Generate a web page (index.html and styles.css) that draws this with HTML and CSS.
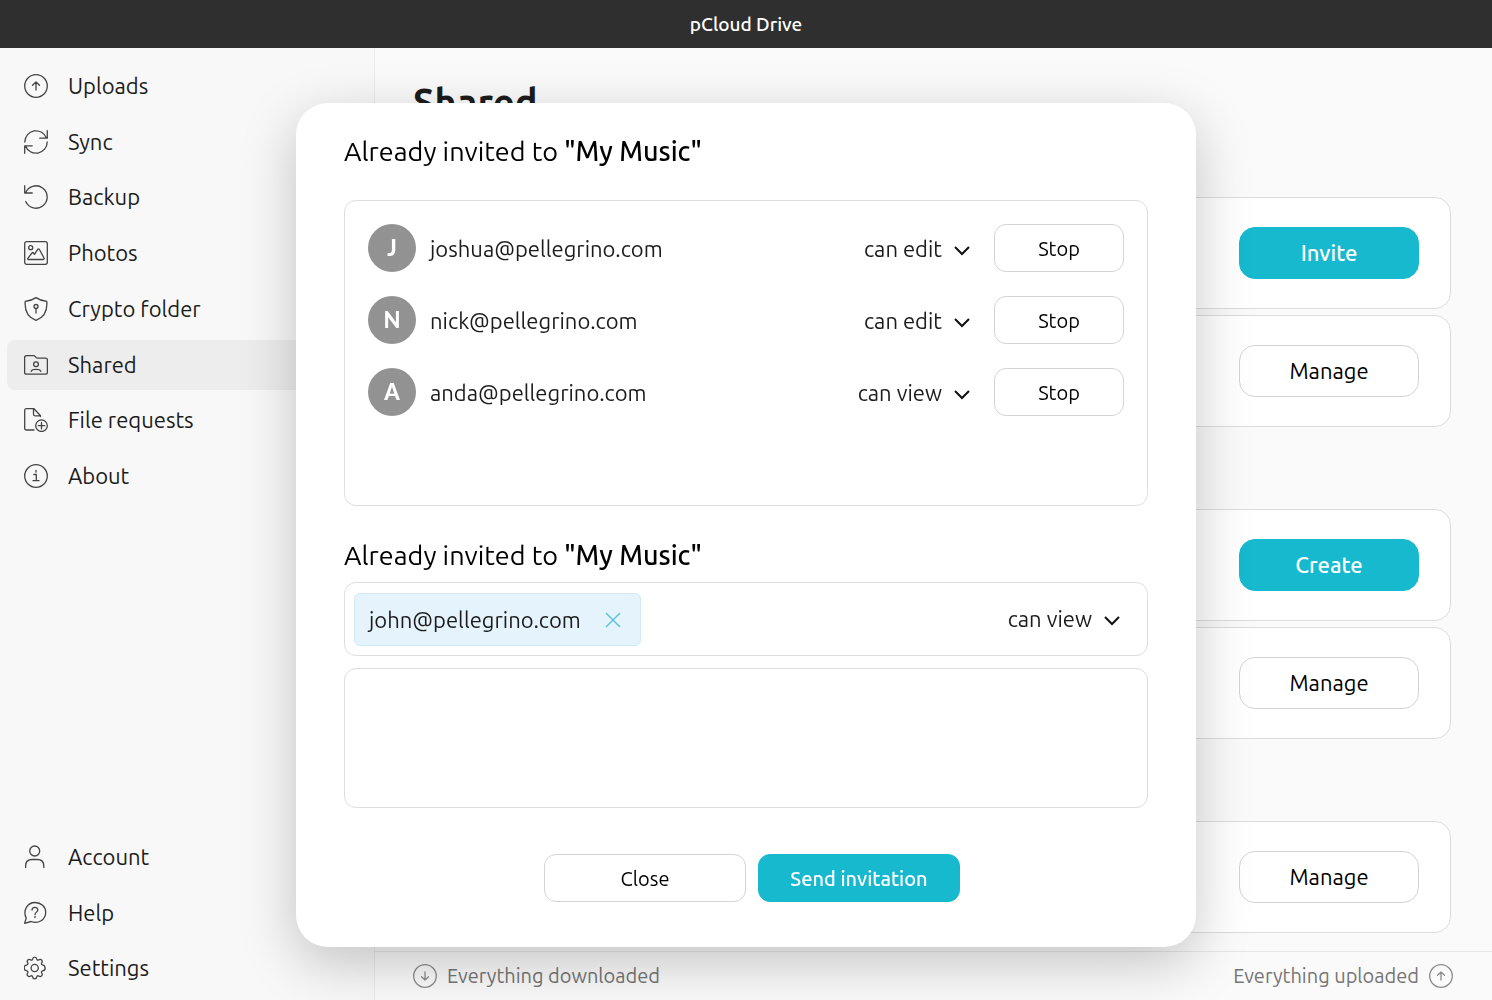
FILE: index.html
```html
<!DOCTYPE html>
<html lang="en">
<head>
<meta charset="utf-8">
<title>pCloud Drive</title>
<meta name="viewport" content="width=device-width, initial-scale=1">
<link rel="stylesheet" href="styles.css">
</head>
<body>
<div class="app">
  <header class="titlebar">pCloud Drive</header>

  <aside class="sidebar">
    <nav class="nav nav-main" aria-label="Main">
      <a class="nav-item" href="#uploads">
        <svg class="icon" viewBox="0 0 24 24"><circle cx="12" cy="12" r="11.3"/><path d="M12 16V8.200M8.500 11.300 12 8l3.500 3.300"/></svg>
        Uploads</a>
      <a class="nav-item" href="#sync">
        <svg class="icon" viewBox="0 0 24 24"><path d="M.8 12A11.200 11.200 0 0 1 22.500 8.100M23.300.7v7.500h-7.500M23.200 12A11.200 11.200 0 0 1 1.500 15.900M.7 23.300v-7.500h7.500"/></svg>
        Sync</a>
      <a class="nav-item" href="#backup">
        <svg class="icon" viewBox="0 0 24 24"><path d="M.7.700v7.300h7.500M1.500 8a11.200 11.200 0 1 1 .200 8.500"/></svg>
        Backup</a>
      <a class="nav-item" href="#photos">
        <svg class="icon" viewBox="0 0 24 24"><rect x=".7" y=".7" width="22.600" height="22.600" rx="2"/><circle cx="6.700" cy="6.700" r="2"/><path d="M4.500 18.500c-.8 0-.9-.7-.5-1.300l4-5.200c.6-.7 1-.7 1.500 0l1 1.300 3.200-5c.5-.7 1.100-.7 1.600 0l4.700 8.700c.4.800.1 1.500-.7 1.500z"/></svg>
        Photos</a>
      <a class="nav-item" href="#crypto">
        <svg class="icon" viewBox="0 0 24 24"><path d="M12 .6c3.500 2.400 6.800 3.400 10.800 3.800.7 8.600-2.300 15.800-10.800 19C3.500 20.200.5 13 1.200 4.400 5.200 4 8.500 3 12 .6z"/><circle cx="12" cy="9.500" r="2"/><path d="M12 11.500v4.500"/></svg>
        Crypto folder</a>
      <a class="nav-item active" href="#shared" aria-current="page">
        <svg class="icon" viewBox="0 0 24 24"><path d="M2.500 2.700h7c.8 0 1.300.3 1.800.9.600.9 1.200 1.500 2.200 1.500h8c1.200 0 1.900.7 1.900 1.900v12.300c0 1.200-.7 1.900-1.900 1.900h-19c-1.200 0-1.900-.7-1.900-1.900V4.600c0-1.200.7-1.900 1.900-1.900z"/><circle cx="12" cy="11.300" r="2.400"/><path d="M7.300 18.300c.8-2.500 8.600-2.500 9.400 0"/></svg>
        Shared</a>
      <a class="nav-item" href="#requests">
        <svg class="icon" viewBox="0 0 24 24"><path d="M10 22H2.500C1.300 22 .7 21.400.7 20.200V2.500C.7 1.300 1.300.7 2.500.7H10l6.500 7.100M9.500.7v5.600c0 1 .5 1.500 1.500 1.500h5.500v.800"/><circle cx="17.500" cy="17.700" r="5.800"/><path d="M17.500 14.500v6.400M14.300 17.700h6.400"/></svg>
        File requests</a>
      <a class="nav-item" href="#about">
        <svg class="icon" viewBox="0 0 24 24"><circle cx="12" cy="12" r="11.300"/><path d="M9.800 10.500h2.500v6M9 16.700h6M12 6.500v1.700"/></svg>
        About</a>
    </nav>
    <nav class="nav nav-foot" aria-label="Account">
      <a class="nav-item" href="#account">
        <svg class="icon" viewBox="0 0 24 24"><circle cx="10.700" cy="6" r="5"/><path d="M1.600 22.500v-1.500c0-4 2.500-6.500 6.500-6.500h5.200c4 0 6.500 2.500 6.500 6.500v1.500"/></svg>
        Account</a>
      <a class="nav-item" href="#help">
        <svg class="icon" viewBox="0 0 24 24"><path d="M.6 22.300l1.600-5.200C-1.500 9.500 3.500 1.500 11 1.500c6 0 10.700 4 10.700 9.700 0 7.500-7.200 12-14.700 9.300z"/><path d="M8 9c0-3.500 5.800-3.500 5.800 0 0 2-2.800 2.300-2.800 4.600M11 15.500v1"/></svg>
        Help</a>
      <a class="nav-item" href="#settings">
        <svg class="icon" viewBox="0 0 24 24"><circle cx="10.700" cy="12" r="3.600"/><path d="M8.600 3.100C9 .5 12.400.5 12.800 3.100c.2 1 1.100 1.300 1.900.8 2.200-1.600 4.500.7 3 2.900-.6.900-.2 1.800.8 2 2.800.4 4.100 5.600 0 6.100-1 .2-1.400 1.100-.8 2 1.600 2.200-.8 4.700-3 3.100-.8-.5-1.700-.1-1.900.9-.4 2.600-3.800 2.600-4.200 0-.2-1-1.100-1.400-1.900-.9-2.200 1.600-4.600-.9-3-3.100.6-.9.200-1.800-.8-2-3.700-.5-3.700-5.600 0-6.100 1-.2 1.400-1.100.8-2-1.500-2.200.8-4.500 3-2.900.8.500 1.700.2 1.900-.8z"/></svg>
        Settings</a>
    </nav>
  </aside>

  <main class="content">
    <h1 class="page-title">Shared</h1>
    <div class="groups">
      <section class="group">
        <div class="card"><button class="btn btn-large btn-primary" type="button">Invite</button></div>
        <div class="card"><button class="btn btn-large" type="button">Manage</button></div>
      </section>
      <section class="group">
        <div class="card"><button class="btn btn-large btn-primary" type="button">Create</button></div>
        <div class="card"><button class="btn btn-large" type="button">Manage</button></div>
      </section>
      <section class="group">
        <div class="card"><button class="btn btn-large" type="button">Manage</button></div>
      </section>
    </div>
  </main>

  <footer class="statusbar">
    <span class="status">
      <svg class="icon" viewBox="0 0 24 24"><circle cx="12" cy="12" r="11.300"/><path d="M12 8v7.800M8.500 12.700 12 16l3.500-3.300"/></svg>
      Everything downloaded</span>
    <span class="status">Everything uploaded
      <svg class="icon" viewBox="0 0 24 24"><circle cx="12" cy="12" r="11.300"/><path d="M12 16V8.200M8.500 11.300 12 8l3.500 3.300"/></svg></span>
  </footer>
</div>

<div class="overlay">
  <form class="dialog" role="dialog" aria-labelledby="dialog-title">
    <h2 class="dialog-title" id="dialog-title">Already invited to <strong>"My Music"</strong></h2>
    <ul class="people">
      <li class="person">
        <span class="avatar">J</span>
        <span class="email">joshua@pellegrino.com</span>
        <span class="picker">
          <select class="picker-select" aria-label="Permission for joshua@pellegrino.com"><option selected>can edit</option><option>can view</option></select>
          <svg class="chevron" viewBox="0 0 16 10"><path d="M1 1l7 7 7-7"/></svg>
        </span>
        <button class="btn btn-stop" type="button">Stop</button>
      </li>
      <li class="person">
        <span class="avatar">N</span>
        <span class="email">nick@pellegrino.com</span>
        <span class="picker">
          <select class="picker-select" aria-label="Permission for nick@pellegrino.com"><option selected>can edit</option><option>can view</option></select>
          <svg class="chevron" viewBox="0 0 16 10"><path d="M1 1l7 7 7-7"/></svg>
        </span>
        <button class="btn btn-stop" type="button">Stop</button>
      </li>
      <li class="person">
        <span class="avatar">A</span>
        <span class="email">anda@pellegrino.com</span>
        <span class="picker">
          <select class="picker-select" aria-label="Permission for anda@pellegrino.com"><option>can edit</option><option selected>can view</option></select>
          <svg class="chevron" viewBox="0 0 16 10"><path d="M1 1l7 7 7-7"/></svg>
        </span>
        <button class="btn btn-stop" type="button">Stop</button>
      </li>
    </ul>

    <h2 class="dialog-title invite-title">Already invited to <strong>"My Music"</strong></h2>
    <div class="invite-box">
      <span class="chip">john@pellegrino.com
        <button class="chip-remove" type="button" aria-label="Remove john@pellegrino.com"><svg viewBox="0 0 16 16"><path d="M1 1l14 14M15 1 1 15"/></svg></button>
      </span>
      <input class="invite-input" type="email" aria-label="Add an email address">
      <span class="picker">
        <select class="picker-select" aria-label="Permission for new people"><option>can edit</option><option selected>can view</option></select>
        <svg class="chevron" viewBox="0 0 16 10"><path d="M1 1l7 7 7-7"/></svg>
      </span>
    </div>
    <textarea class="message" aria-label="Message"></textarea>
    <div class="actions">
      <button class="btn btn-action" type="button">Close</button>
      <button class="btn btn-action btn-primary" type="submit">Send invitation</button>
    </div>
  </form>
</div>
</body>
</html>
```

FILE: styles.css
```css
* {
  box-sizing: border-box;
}

body {
  margin: 0;
  font-family: Ubuntu, "Noto Sans", sans-serif;
  font-size: 22px;
  line-height: 28px;
  color: #1c1c1c;
  background: #fafafa;
}

button,
input,
select,
textarea {
  font: inherit;
  color: inherit;
}

svg {
  display: block;
  flex: none;
  fill: none;
  stroke: currentColor;
}

/* Application shell */

.app {
  display: grid;
  grid-template: 48px 1fr auto / 375px 1fr;
  height: 100vh;
}

.titlebar {
  grid-column: 1 / -1;
  display: flex;
  align-items: center;
  justify-content: center;
  font-size: 19px;
  font-weight: 500;
  color: #fff;
  background: #2f2f2f;
}

.sidebar {
  grid-row: 2 / 4;
  display: flex;
  flex-direction: column;
  justify-content: space-between;
  padding: 13px 7px 7px;
  background: #f8f8f8;
  border-right: 1px solid #ebebeb;
}

.nav {
  display: flex;
  flex-direction: column;
  justify-content: space-between;
}

.nav-main {
  height: 440px;
}

.nav-foot {
  height: 161px;
}

.nav-item {
  display: flex;
  align-items: center;
  gap: 20px;
  height: 50px;
  padding: 0 17px;
  border-radius: 8px;
  color: inherit;
  text-decoration: none;
}

.nav-item.active {
  background: #ededed;
}

.icon {
  width: 24px;
  height: 24px;
  color: #444;
  stroke-width: 1.3;
  stroke-linecap: round;
  stroke-linejoin: round;
}

.content {
  padding: 30px 41px 0 38px;
  overflow: hidden;
}

.page-title {
  margin: 0 0 71px;
  font-size: 38px;
  line-height: 48px;
  font-weight: 700;
}

.groups {
  display: flex;
  flex-direction: column;
  gap: 82px;
}

.group {
  display: flex;
  flex-direction: column;
  gap: 6px;
}

.card {
  display: flex;
  align-items: center;
  justify-content: flex-end;
  height: 112px;
  padding: 0 31px;
  background: #fff;
  border: 1px solid #dcdcdc;
  border-radius: 16px;
}

.statusbar {
  display: flex;
  align-items: center;
  justify-content: space-between;
  height: 49px;
  padding: 0 39px 0 38px;
  font-size: 20px;
  color: #757575;
  border-top: 1px solid #e6e6e6;
}

.status {
  display: flex;
  align-items: center;
  gap: 10px;
}

.status .icon {
  color: #8c8c8c;
}

/* Buttons */

.btn {
  padding: 2px 0 0;
  font-size: 20px;
  color: #000;
  background: #fff;
  border: 1px solid #d4d4d4;
  border-radius: 12px;
  cursor: pointer;
}

.btn-large {
  width: 180px;
  height: 52px;
  padding: 0;
  font-size: 22px;
  border-radius: 16px;
}

.btn-stop {
  width: 130px;
  height: 48px;
}

.btn-action {
  width: 202px;
  height: 48px;
}

.btn-primary {
  color: #fff;
  font-weight: 500;
  background: #17b9cf;
  border-color: #17b9cf;
}

/* Sharing dialog */

.overlay {
  position: fixed;
  inset: 0;
  display: flex;
  align-items: flex-start;
  justify-content: center;
  padding-top: 103px;
}

.dialog {
  width: 900px;
  max-width: 100%;
  padding: 28px 48px 45px;
  background: #fff;
  border-radius: 32px;
  box-shadow: 0 16px 56px rgba(0, 0, 0, 0.22);
}

.dialog-title {
  margin: 0;
  font-size: 27px;
  line-height: 40px;
  font-weight: 400;
  color: #000;
}

.dialog-title strong {
  font-weight: 500;
}

.people {
  display: flex;
  flex-direction: column;
  gap: 24px;
  min-height: 306px;
  margin: 29px 0 0;
  padding: 23px;
  list-style: none;
  border: 1px solid #dedede;
  border-radius: 12px;
}

.person {
  display: flex;
  align-items: center;
}

.avatar {
  display: grid;
  place-items: center;
  width: 48px;
  height: 48px;
  margin-right: 14px;
  border-radius: 50%;
  font-family: Lato, sans-serif;
  font-weight: 900;
  color: #fff;
  background: #929292;
}

.email {
  flex: 1;
}

.email,
.person .picker {
  padding-top: 2px;
}

.picker {
  display: grid;
  align-items: center;
  justify-items: end;
}

.picker-select {
  grid-area: 1 / 1;
  appearance: none;
  padding: 0 28px 0 0;
  text-align-last: right;
  background: none;
  border: 0;
}

.chevron {
  grid-area: 1 / 1;
  width: 16px;
  height: 10px;
  margin-top: 4px;
  stroke: #111;
  stroke-width: 2;
  pointer-events: none;
}

.btn-stop {
  margin-left: 24px;
}

.invite-title {
  margin-top: 29px;
}

.invite-box {
  display: flex;
  align-items: center;
  height: 74px;
  margin-top: 7px;
  padding: 0 27px 0 9px;
  border: 1px solid #dedede;
  border-radius: 12px;
}

.chip {
  display: flex;
  align-items: center;
  justify-content: space-between;
  width: 287px;
  height: 53px;
  padding: 2px 19px 0 14px;
  background: #e5f4fc;
  border: 1px solid #cfeaf5;
  border-radius: 6px;
}

.chip-remove {
  padding: 0;
  color: #5fc4d6;
  background: none;
  border: 0;
}

.chip-remove svg {
  width: 16px;
  height: 16px;
  stroke-width: 1.5;
}

.invite-input {
  flex: 1;
  min-width: 0;
  background: none;
  border: 0;
}

.message {
  display: block;
  width: 100%;
  height: 140px;
  margin-top: 12px;
  padding: 12px 14px;
  resize: none;
  background: #fff;
  border: 1px solid #dedede;
  border-radius: 12px;
}

.actions {
  display: flex;
  justify-content: center;
  gap: 12px;
  margin-top: 46px;
  padding-left: 12px;
}
```
